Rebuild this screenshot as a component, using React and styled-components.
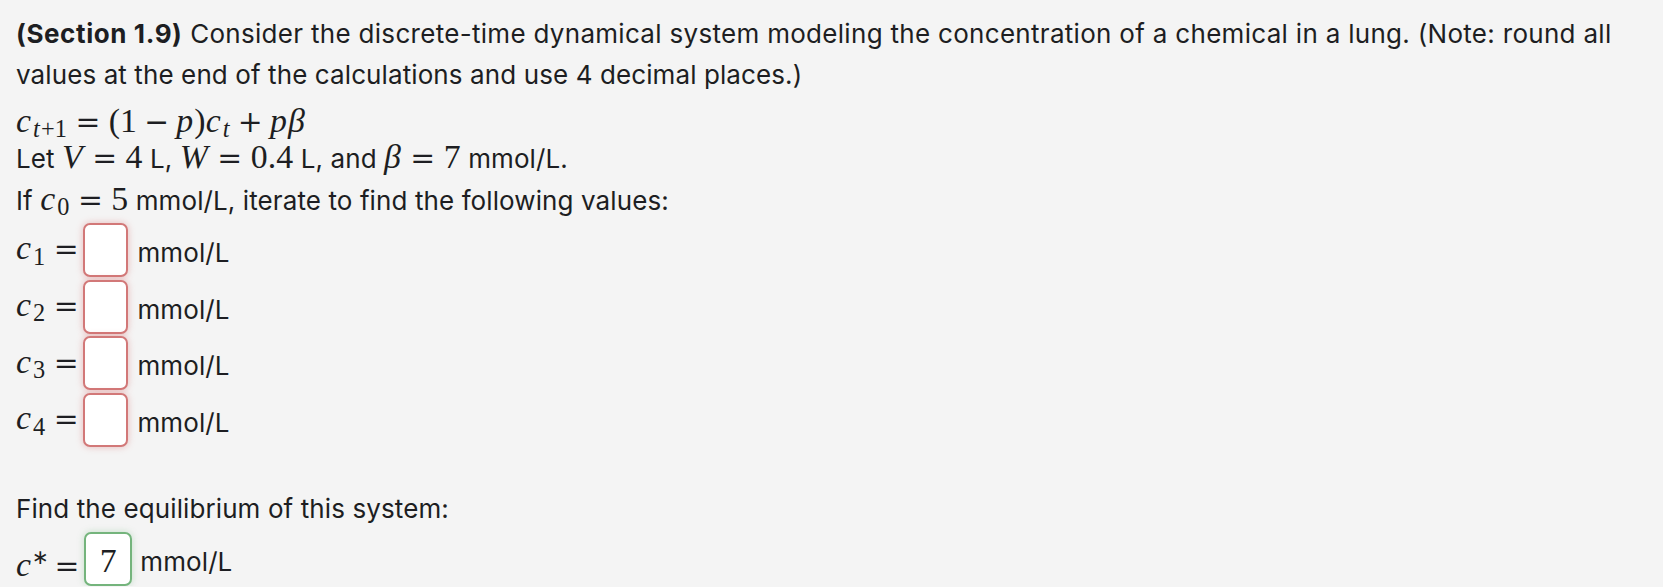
import React from 'react'
import styled, { createGlobalStyle } from 'styled-components'

const GlobalStyle = createGlobalStyle`
  html, body {
    margin: 0;
    background: #f4f4f4;
  }
  body {
    font-family: Inter, "Noto Sans", sans-serif;
    color: #1d1e22;
  }
`

const rows = ['1', '2', '3', '4']

export default function App() {
  return (
    <React.Fragment>
      <GlobalStyle />
      <Question>
        <TextLine $wide>
          <Bold>(Section 1.9)</Bold> Consider the discrete-time dynamical system modeling the
          concentration of a chemical in a lung. (Note: round all
        </TextLine>
        <TextLine>values at the end of the calculations and use 4 decimal places.)</TextLine>

        <FormulaLine>
          <Math>
            <Var>c</Var>
            <Sub>
              <Var>t</Var>+1
            </Sub>
            <Op>=</Op>(1<Bin>−</Bin>
            <Var>p</Var>)<Var>c</Var>
            <Sub>
              <Var>t</Var>
            </Sub>
            <Bin>+</Bin>
            <Var>p</Var>
            <Var>β</Var>
          </Math>
        </FormulaLine>

        <ShortLine>
          Let{' '}
          <Math>
            <Var>V</Var>
            <Op>=</Op>4
          </Math>{' '}
          L,{' '}
          <Math>
            <Var>W</Var>
            <Op>=</Op>0.4
          </Math>{' '}
          L, and{' '}
          <Math>
            <Var>β</Var>
            <Op>=</Op>7
          </Math>{' '}
          mmol/L.
        </ShortLine>

        <IfLine>
          If{' '}
          <Math>
            <Var>c</Var>
            <Sub>0</Sub>
            <Op>=</Op>5
          </Math>{' '}
          mmol/L, iterate to find the following values:
        </IfLine>

        <AnswerList>
          {rows.map(n => (
            <AnswerRow key={n}>
              <Label>
                <Math>
                  <Var>c</Var>
                  <Sub>{n}</Sub>
                  <Op $tight>=</Op>
                </Math>
              </Label>
              <AnswerBox $state="wrong" />
              <Unit>mmol/L</Unit>
            </AnswerRow>
          ))}
        </AnswerList>

        <EquilibriumLine>Find the equilibrium of this system:</EquilibriumLine>

        <AnswerRow $gap="3px">
          <Label>
            <Math>
              <Var>c</Var>
              <Sup>∗</Sup>
              <Op $tight $star>
                =
              </Op>
            </Math>
          </Label>
          <AnswerBox $state="right">
            <Math>7</Math>
          </AnswerBox>
          <Unit $narrow>mmol/L</Unit>
        </AnswerRow>
      </Question>
    </React.Fragment>
  )
}

const Question = styled.div`
  padding: 13px 16px 0;
  font-size: 26px;
  letter-spacing: 0.1px;
`

const TextLine = styled.div`
  line-height: 41px;
  white-space: nowrap;
  letter-spacing: ${props => (props.$wide ? '0.3px' : '0.1px')};
`

const FormulaLine = styled.div`
  line-height: 40px;
  padding-top: 7.5px;
`

const ShortLine = styled.div`
  line-height: 32px;
  white-space: nowrap;
`

const IfLine = styled(TextLine)`
  margin-top: 5.5px;
`

const Bold = styled.span`
  font-weight: 700;
  letter-spacing: 0.6px;
`

const Math = styled.span`
  font-family: "Liberation Serif", "DejaVu Serif", serif;
  font-size: 1.3em;
  line-height: 0;
  letter-spacing: 0.1px;
  white-space: nowrap;
`

const Var = styled.i`
  font-style: italic;
  margin-right: 1px;
`

const Sub = styled.sub`
  font-size: 0.72em;
  vertical-align: -0.22em;
  line-height: 0;
  margin-left: 1px;
`

const Sup = styled.sup`
  font-family: "DejaVu Sans", sans-serif;
  font-size: 0.6em;
  vertical-align: 0.55em;
  line-height: 0;
`

const Op = styled.span`
  font-family: "DejaVu Serif", serif;
  font-size: 0.88em;
  margin: ${props =>
    props.$star ? '0 0.16em 0 0.18em' : props.$tight ? '0 0.16em 0 0.28em' : '0 0.28em'};
`

const Bin = styled.span`
  font-family: "DejaVu Serif", serif;
  font-size: 0.88em;
  margin: 0 0.24em;
`

const AnswerList = styled.div`
  display: flex;
  flex-direction: column;
  gap: 2.7px;
  margin-top: 2px;
`

const AnswerRow = styled.div`
  display: flex;
  align-items: center;
  height: 54px;
  margin-top: ${props => props.$gap || '0'};
`

const Label = styled.div`
  display: flex;
  align-items: center;
  padding-top: 5px;
`

const AnswerBox = styled.div`
  box-sizing: border-box;
  width: ${props => (props.$state === 'right' ? '48px' : '45px')};
  height: 54px;
  border-radius: 7px;
  background: #fff;
  display: flex;
  align-items: center;
  justify-content: center;
  padding-top: 3px;
  border: 2px solid ${props => (props.$state === 'right' ? '#74b47c' : '#d27878')};
  box-shadow: 0 0 7px
    ${props => (props.$state === 'right' ? 'rgba(110, 180, 120, 0.35)' : 'rgba(215, 100, 100, 0.4)')};
`

const Unit = styled.span`
  margin-left: ${props => (props.$narrow ? '8px' : '9px')};
  padding-top: 5px;
`

const EquilibriumLine = styled.div`
  line-height: 41px;
  margin-top: 41px;
`
